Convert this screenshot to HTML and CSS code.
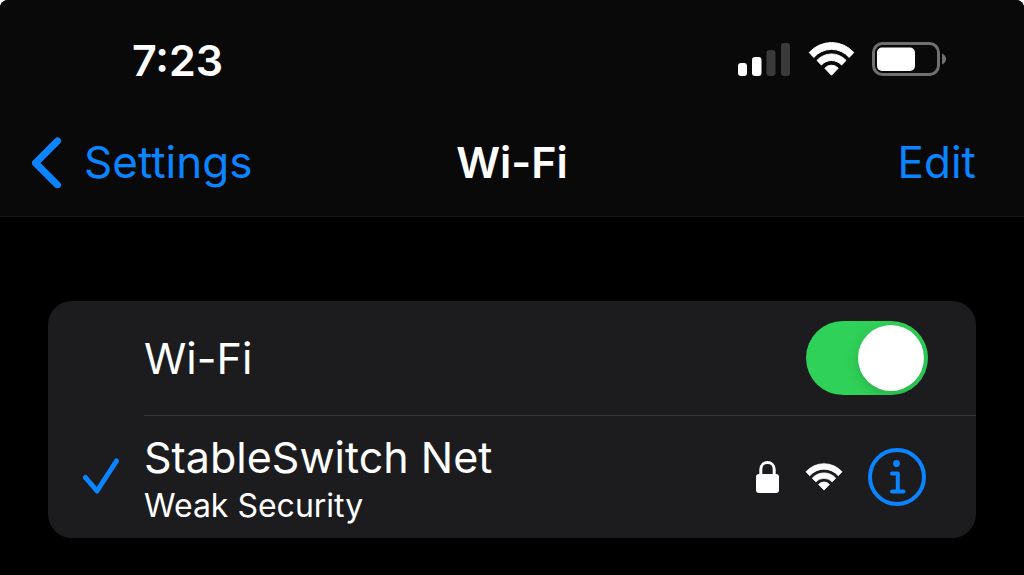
FILE: index.html
```html
<!DOCTYPE html>
<html lang="en">
<head>
    <meta charset="UTF-8">
    <meta name="viewport" content="width=device-width, initial-scale=1.0">
    <title>Wi-Fi</title>
    <link rel="stylesheet" href="styles.css">
</head>
<body>
    <svg class="symbols" aria-hidden="true">
        <symbol id="wifi" viewBox="0 0 47 34">
            <path d="M1.2 10.5A30 30 0 0 1 45.8 10.5L41.2 15.4A23.5 23.5 0 0 0 5.8 15.4Z"/>
            <path d="M9 18.4A19.6 19.6 0 0 1 38 18.4L33.6 23A13.6 13.6 0 0 0 13.4 23Z"/>
            <path d="M16.8 26.2A9 9 0 0 1 30.2 26.2L23.5 33.2Z"/>
        </symbol>
    </svg>

    <div class="screen">
        <header class="header">
            <div class="status">
                <span class="time">7:23</span>
                <div class="status-icons">
                    <svg class="signal" width="53" height="34" viewBox="0 0 53 34">
                        <rect x="0" y="21" width="9" height="13" rx="3"/>
                        <rect x="14" y="15" width="9.500" height="19" rx="3"/>
                        <rect class="off" x="28.500" y="8" width="9" height="26" rx="3"/>
                        <rect class="off" x="43" y="1" width="9" height="33" rx="3"/>
                    </svg>
                    <svg class="wifi" width="47" height="34"><use href="#wifi"/></svg>
                    <svg class="battery" width="76" height="34" viewBox="0 0 76 34">
                        <rect class="shell" x="1.5" y="1.5" width="65" height="31" rx="9"/>
                        <rect x="5" y="5.5" width="38" height="23.5" rx="5"/>
                        <path class="tip" d="M70 11.5C75.500 14 75.500 20 70 22.5Z"/>
                    </svg>
                </div>
            </div>
            <nav class="nav">
                <a class="back" href="#">
                    <svg width="31" height="52" viewBox="0 0 31 52"><path d="M25.500 5L3.500 27L25.500 49"/></svg>
                    Settings
                </a>
                <h1 class="title">Wi-Fi</h1>
                <button class="edit" type="button">Edit</button>
            </nav>
        </header>

        <main class="content">
            <div class="card">
                <div class="row">
                    <div class="row-body">
                        <label class="name" for="wifi-switch">Wi-Fi</label>
                        <input class="switch" type="checkbox" role="switch" id="wifi-switch" checked>
                    </div>
                </div>
                <div class="row network">
                    <svg class="check" width="38" height="38" viewBox="0 0 38 38"><path d="M3.500 19.500L15 33L34.500 3"/></svg>
                    <div class="row-body">
                        <div class="network-text">
                            <div class="name">StableSwitch Net</div>
                            <div class="note">Weak Security</div>
                        </div>
                        <div class="network-icons">
                            <svg class="lock" width="24" height="32" viewBox="0 0 24 32">
                                <rect x="0" y="13" width="23" height="19" rx="3"/>
                                <path d="M4.800 14V8.500C4.800 -.8 18.200 -.8 18.200 8.500V14"/>
                            </svg>
                            <svg class="wifi" width="38" height="28"><use href="#wifi"/></svg>
                            <button class="info" type="button" aria-label="Network details">
                                <svg width="58" height="58" viewBox="0 0 58 58">
                                    <circle class="ring" cx="29" cy="29" r="27"/>
                                    <circle class="dot" cx="28.500" cy="15.500" r="3.400"/>
                                    <path d="M24 25.500H29.800V43.500M24 43.500H35.500"/>
                                </svg>
                            </button>
                        </div>
                    </div>
                </div>
            </div>
        </main>
    </div>
</body>
</html>
```
FILE: styles.css
```css
html{
    background-color: #fff;
}
body{
    margin: 0;
    font-family: Inter, "Liberation Sans", Arial, sans-serif;
    color: #fff;
}
svg{
    display: block;
    flex-shrink: 0;
}
button{
    padding: 0;
    border: none;
    background: none;
    font-family: inherit;
    cursor: pointer;
}
.symbols{
    position: absolute;
    width: 0;
    height: 0;
}
.screen{
    min-height: 100vh;
    overflow: hidden;
    border-radius: 8px 8px 0 0;
    background-color: #000;
}

/* header */
.header{
    background-color: #090909;
    border-bottom: 1px solid #161616;
}
.status{
    display: flex;
    align-items: center;
    justify-content: space-between;
    height: 98px;
    padding: 10px 76px 0 132px;
}
.time{
    padding-top: 2px;
    font-size: 43px;
    font-weight: 600;
}
.status-icons{
    display: flex;
    align-items: center;
    gap: 17px;
    fill: #fff;
}
.signal .off{
    fill: #3a3a3a;
}
.battery .shell{
    fill: none;
    stroke: #707070;
    stroke-width: 3;
}
.battery .tip{
    fill: #707070;
}
.wifi{
    fill: #fff;
    stroke: #fff;
    stroke-width: 1;
    stroke-linejoin: round;
}
.nav{
    display: grid;
    grid-template-columns: 1fr auto 1fr;
    align-items: center;
    height: 108px;
    padding: 0 48px;
    font-size: 44px;
}
.back{
    display: flex;
    align-items: center;
    gap: 21px;
    margin-left: -16px;
    color: #0a84ff;
    text-decoration: none;
}
.back path,
.check path{
    fill: none;
    stroke: #0a84ff;
    stroke-width: 7;
    stroke-linecap: round;
    stroke-linejoin: round;
}
.title{
    margin: 0;
    font-size: 43px;
    font-weight: 600;
}
.edit{
    justify-self: end;
    font-size: 44px;
    color: #0a84ff;
}

/* list */
.content{
    padding: 84px 48px 36px;
}
.card{
    border-radius: 24px;
    background-color: #1c1c1e;
}
.row{
    display: flex;
    align-items: center;
    padding-left: 96px;
}
.row-body{
    flex: 1;
    display: flex;
    align-items: center;
    justify-content: space-between;
    min-height: 114px;
    padding-right: 48px;
}
.row:first-child .row-body{
    border-bottom: 1px solid #38383a;
}
.network{
    padding-left: 34px;
}
.network .row-body{
    min-height: 122px;
    padding-left: 24px;
    padding-right: 50px;
}
.name{
    font-size: 43px;
    line-height: 54px;
}
.network-text{
    padding-top: 2px;
}
.note{
    font-size: 32px;
    line-height: 43px;
}
.check path{
    stroke-width: 5;
}
.switch{
    appearance: none;
    box-sizing: border-box;
    display: flex;
    width: 122px;
    height: 74px;
    margin: 0;
    padding: 4px;
    border-radius: 37px;
    overflow: hidden;
    background-color: #39393d;
    cursor: pointer;
}
.switch::before{
    content: "";
    width: 66px;
    height: 66px;
    border-radius: 50%;
    background-color: #fff;
    box-shadow: 0 4px 14px rgba(0, 0, 0, 0.15);
}
.switch:checked{
    justify-content: flex-end;
    background-color: #30d158;
}
.network-icons{
    display: flex;
    align-items: center;
    gap: 25px;
}
.lock rect{
    fill: #fff;
}
.lock path{
    fill: none;
    stroke: #fff;
    stroke-width: 3;
}
.info path,
.info .ring{
    fill: none;
    stroke: #0a84ff;
    stroke-width: 4;
    stroke-linecap: round;
    stroke-linejoin: round;
}
.info .dot{
    fill: #0a84ff;
}
```
